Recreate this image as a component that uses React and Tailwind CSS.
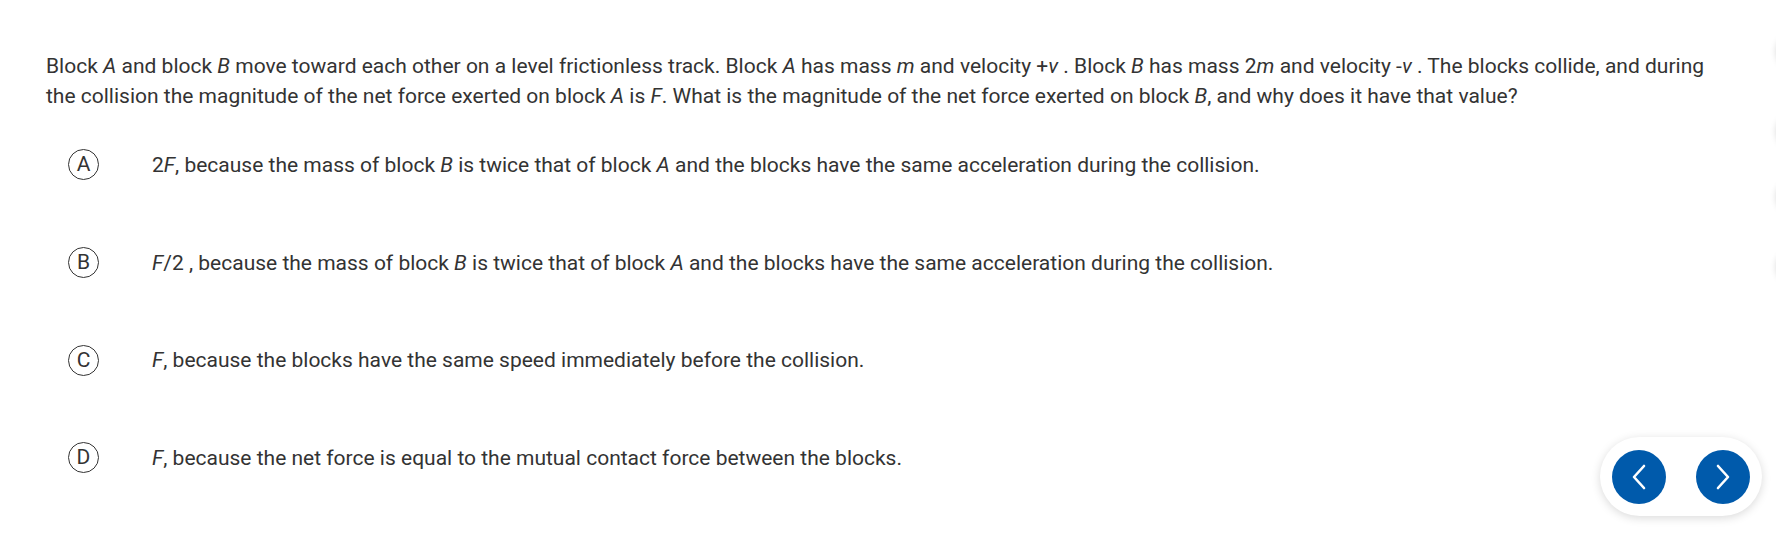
import React from 'react';

const options = [
  {
    key: 'A',
    body: (
      <>
        2<i>F</i>, because the mass of block <i>B</i> is twice that of block <i>A</i> and the blocks have the same acceleration during the collision.
      </>
    ),
  },
  {
    key: 'B',
    body: (
      <>
        <i>F</i>/2 , because the mass of block <i>B</i> is twice that of block <i>A</i> and the blocks have the same acceleration during the collision.
      </>
    ),
  },
  {
    key: 'C',
    body: (
      <>
        <i>F</i>, because the blocks have the same speed immediately before the collision.
      </>
    ),
  },
  {
    key: 'D',
    body: (
      <>
        <i>F</i>, because the net force is equal to the mutual contact force between the blocks.
      </>
    ),
  },
];

const NavButton = ({ dir }) => (
  <button className="w-[54px] h-[54px] rounded-full bg-[#005aab] flex items-center justify-center">
    <svg width="20" height="28" viewBox="0 0 20 28" fill="none">
      {dir === 'prev' ? (
        <polyline points="15,3 5,14 15,25" stroke="white" strokeWidth="2.6" strokeLinecap="round" strokeLinejoin="round" />
      ) : (
        <polyline points="5,3 15,14 5,25" stroke="white" strokeWidth="2.6" strokeLinecap="round" strokeLinejoin="round" />
      )}
    </svg>
  </button>
);

export default function App() {
  return (
    <div
      className="relative w-[1776px] h-[543px] bg-white overflow-hidden text-[#333]"
      style={{ fontFamily: 'Roboto, "Liberation Sans", sans-serif' }}
    >
      <div className="pl-[46px] pt-[51px]">
        <p className="w-[1685px] text-[21px] leading-[30px]">
          Block <i>A</i> and block <i>B</i> move toward each other on a level frictionless track. Block <i>A</i> has mass <i>m</i> and velocity +<i>v</i> . Block <i>B</i> has mass 2<i>m</i> and velocity -<i>v</i> . The blocks collide, and during the collision the magnitude of the net force exerted on block <i>A</i> is <i>F</i>. What is the magnitude of the net force exerted on block <i>B</i>, and why does it have that value?
        </p>

        <div className="mt-[5px] pl-[22px]">
          {options.map((o) => (
            <div key={o.key} className="h-[97.7px] flex items-center">
              <div className="w-[31px] h-[31px] rounded-full border-[1.5px] border-[#333] flex items-center justify-center text-[21px] leading-[21px] shrink-0">
                {o.key}
              </div>
              <div className="ml-[53px] text-[21px] leading-[30px]">{o.body}</div>
            </div>
          ))}
        </div>
      </div>

      {/* nav pill */}
      <div className="absolute left-[1600px] top-[437px] w-[162px] h-[79px] rounded-full bg-white shadow-[0_2px_10px_rgba(0,0,0,0.15)] flex items-center justify-between px-[12px]">
        <NavButton dir="prev" />
        <NavButton dir="next" />
      </div>

      {/* edge tabs peeking from the right */}
      <div className="absolute left-[1777px] top-[33px] w-[40px] h-[37px] rounded-l-full bg-white shadow-[0_0_7px_rgba(0,0,0,0.2)]" />
      <div className="absolute left-[1777px] top-[113px] w-[40px] h-[37px] rounded-l-full bg-white shadow-[0_0_7px_rgba(0,0,0,0.2)]" />
      <div className="absolute left-[1777px] top-[180px] w-[40px] h-[34px] rounded-l-full bg-white shadow-[0_0_7px_rgba(0,0,0,0.2)]" />
      <div className="absolute left-[1777px] top-[250px] w-[40px] h-[34px] rounded-l-full bg-white shadow-[0_0_7px_rgba(0,0,0,0.2)]" />
    </div>
  );
}
